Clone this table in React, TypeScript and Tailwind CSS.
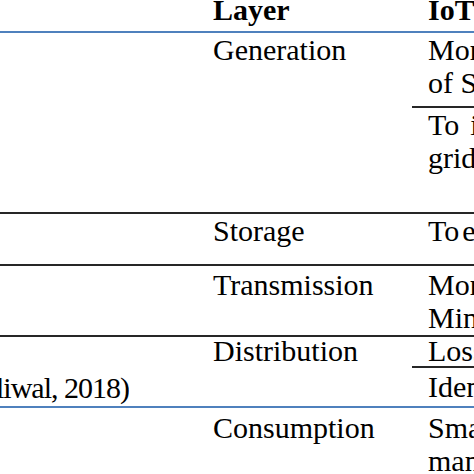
import React from 'react';

// One line of table text, cut off at the right edge like the source figure
function Line({ children, bold = false }: { children: React.ReactNode; bold?: boolean }) {
  return <div className={`whitespace-nowrap ${bold ? 'font-bold' : ''}`}>{children}</div>;
}

export default function App() {
  return (
    <div className="w-[474px] h-[474px] overflow-hidden bg-white text-black font-['Liberation_Serif','Times_New_Roman',serif] text-[30px] leading-[33px]">
      {/* Header */}
      <div className="grid grid-cols-[213px_199px_1fr] h-[33px] border-b-2 border-[#4f81bd]">
        <div />
        <div className="-mt-[7px]">
          <Line bold>Layer</Line>
        </div>
        <div className="-mt-[7px] pl-[16px]">
          <Line bold>IoT Applications</Line>
        </div>
      </div>

      {/* Generation */}
      <div className="grid grid-cols-[213px_199px_1fr] h-[181px] border-b-2 border-[#262626]">
        <div />
        <div>
          <Line>Generation</Line>
        </div>
        <div className="flex flex-col">
          <div className="h-[75px] border-b-2 border-[#262626] pl-[16px]">
            <Line>Monitoring the generation</Line>
            <Line>of Solar and wind power</Line>
          </div>
          <div className="flex-1 pl-[16px]">
            <Line>
              To<span className="ml-[11px]">integrate renewables</span>
            </Line>
            <Line>grid</Line>
          </div>
        </div>
      </div>

      {/* Storage */}
      <div className="grid grid-cols-[213px_199px_1fr] h-[52px] border-b-2 border-[#262626]">
        <div />
        <div>
          <Line>Storage</Line>
        </div>
        <div className="pl-[16px]">
          <Line>
            To<span className="ml-[3px]">ensure</span>
          </Line>
        </div>
      </div>

      {/* Transmission */}
      <div className="grid grid-cols-[213px_199px_1fr] h-[71px] border-b-2 border-[#262626]">
        <div />
        <div className="pt-[2px]">
          <Line>Transmission</Line>
        </div>
        <div className="pt-[2px] pl-[16px]">
          <Line>Monitoring of lines</Line>
          <Line>Minimizing losses</Line>
        </div>
      </div>

      {/* Distribution */}
      <div className="grid grid-cols-[213px_199px_1fr] h-[71px] border-b-2 border-[#4f81bd]">
        <div className="w-[129px] flex justify-end pt-[34px] overflow-hidden tracking-[-1px]">
          <Line>(Kumar, Singh &amp; Paliwal, 2018)</Line>
        </div>
        <div className="-mt-[3px]">
          <Line>Distribution</Line>
        </div>
        <div className="flex flex-col">
          <div className="h-[31px] border-b-2 border-[#262626] pl-[16px]">
            <div className="-mt-[3px]">
              <Line>Loss detection</Line>
            </div>
          </div>
          <div className="flex-1 pt-[2px] pl-[16px]">
            <Line>Identify faults</Line>
          </div>
        </div>
      </div>

      {/* Consumption */}
      <div className="grid grid-cols-[213px_199px_1fr]">
        <div />
        <div className="pt-[3px]">
          <Line>Consumption</Line>
        </div>
        <div className="pt-[3px] pl-[16px]">
          <Line>Smart metering</Line>
          <Line>management</Line>
        </div>
      </div>
    </div>
  );
}
